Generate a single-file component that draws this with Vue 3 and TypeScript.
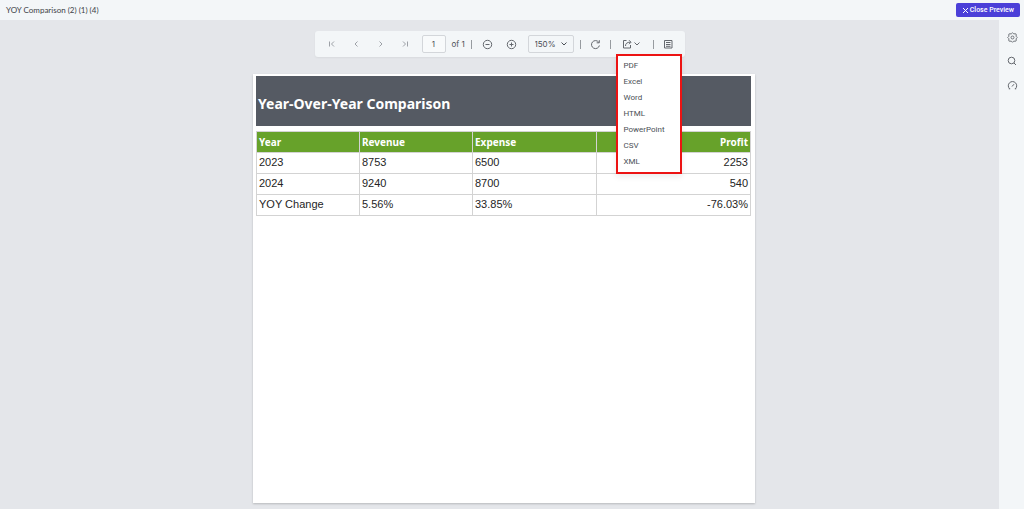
<script setup lang="ts">
import { ref } from 'vue'

interface ReportRow {
  year: string
  revenue: string
  expense: string
  profit: string
}

const pageNumber = ref('1')
const zoom = ref('150%')
const zoomLevels: string[] = ['50%', '100%', '150%', '200%']
const menuOpen = ref(true)
const formats: string[] = ['PDF', 'Excel', 'Word', 'HTML', 'PowerPoint', 'CSV', 'XML']
const rows: ReportRow[] = [
  { year: '2023', revenue: '8753', expense: '6500', profit: '2253' },
  { year: '2024', revenue: '9240', expense: '8700', profit: '540' },
  { year: 'YOY Change', revenue: '5.56%', expense: '33.85%', profit: '-76.03%' },
]
</script>

<template>
  <div class="app">
    <header class="topbar">
      <span class="doc-name">YOY Comparison (2) (1) (4)</span>
      <button class="close" type="button">
        <svg width="7" height="7" viewBox="0 0 7 7"><path d="M1 1l5 5M6 1l-5 5" /></svg>
        <span>Close Preview</span>
      </button>
    </header>
    <div class="body">
      <main class="viewer">
        <div class="toolbar">
          <div class="nav">
            <button type="button" class="icon" aria-label="First page">
              <svg width="8" height="8" viewBox="0 0 8 8"><path d="M1.5 1.5v5M6 1.5L3.5 4 6 6.500" /></svg>
            </button>
            <button type="button" class="icon" aria-label="Previous page">
              <svg width="8" height="8" viewBox="0 0 8 8"><path d="M5.500 1.500L3 4l2.500 2.500" /></svg>
            </button>
            <button type="button" class="icon" aria-label="Next page">
              <svg width="8" height="8" viewBox="0 0 8 8"><path d="M2.500 1.500L5 4 2.500 6.500" /></svg>
            </button>
            <button type="button" class="icon" aria-label="Last page">
              <svg width="8" height="8" viewBox="0 0 8 8"><path d="M2 1.500L4.500 4 2 6.500M6.500 1.500v5" /></svg>
            </button>
          </div>
          <input v-model="pageNumber" class="page-input" type="text" aria-label="Page number" />
          <span class="page-count">of 1</span>
          <span class="sep"></span>
          <button type="button" class="icon" aria-label="Zoom out">
            <svg width="11" height="11" viewBox="0 0 11 11"><circle cx="5.500" cy="5.500" r="4.200" /><path d="M3.500 5.500h4" /></svg>
          </button>
          <button type="button" class="icon" aria-label="Zoom in">
            <svg width="11" height="11" viewBox="0 0 11 11"><circle cx="5.500" cy="5.500" r="4.200" /><path d="M3.500 5.500h4M5.500 3.500v4" /></svg>
          </button>
          <div class="zoom">
            <select v-model="zoom" aria-label="Zoom level">
              <option v-for="level in zoomLevels" :key="level">{{ level }}</option>
            </select>
            <svg class="caret" width="8" height="6" viewBox="0 0 8 6"><path d="M1.500 1.500L4 4l2.500-2.500" /></svg>
          </div>
          <span class="sep"></span>
          <button type="button" class="icon refresh" aria-label="Refresh">
            <svg width="11" height="11" viewBox="0 0 11 11"><path d="M8.700 3.200A4 4 0 1 0 9.400 6.500M9.300 1.200v2.600H6.700" /></svg>
          </button>
          <span class="sep"></span>
          <div class="export">
            <button type="button" class="icon export-button" aria-label="Export" :aria-expanded="menuOpen" @click="menuOpen = !menuOpen">
              <svg width="10" height="10" viewBox="0 0 10 10"><path d="M4.500 1.500h-3v7.500h7V6M3.500 7C3.500 4.500 5 3.200 8.500 3.200M7 1.200l2 2-2 2" /></svg>
              <svg width="8" height="6" viewBox="0 0 8 6"><path d="M1.500 1.500L4 4l2.500-2.500" /></svg>
            </button>
            <ul v-if="menuOpen" class="menu">
              <li v-for="format in formats" :key="format">
                <button type="button">{{ format }}</button>
              </li>
            </ul>
          </div>
          <span class="sep"></span>
          <button type="button" class="icon parameters" aria-label="Parameters">
            <svg width="10" height="10" viewBox="0 0 10 10"><path d="M1.500 1.500h7.500v7.500h-7.500zM3 3.500h4.500M3 5.500h4.500M3 7.300h4.500" /></svg>
          </button>
        </div>
        <section class="page">
          <h1>Year-Over-Year Comparison</h1>
          <table>
            <colgroup>
              <col class="c-year" /><col class="c-revenue" /><col class="c-expense" /><col />
            </colgroup>
            <thead>
              <tr><th>Year</th><th>Revenue</th><th>Expense</th><th class="num">Profit</th></tr>
            </thead>
            <tbody>
              <tr v-for="row in rows" :key="row.year">
                <td>{{ row.year }}</td>
                <td>{{ row.revenue }}</td>
                <td>{{ row.expense }}</td>
                <td class="num">{{ row.profit }}</td>
              </tr>
            </tbody>
          </table>
        </section>
      </main>
      <aside class="side">
        <button type="button" class="icon" aria-label="Settings">
          <svg width="11" height="11" viewBox="0 0 24 24" stroke-width="2">
            <path d="M12 1.500l2.500 2.500h4.500a1 1 0 0 1 1 1v4.500l2.500 2.500-2.500 2.500V19a1 1 0 0 1-1 1h-4.500L12 22.500 9.500 20H5a1 1 0 0 1-1-1v-4.500L1.500 12 4 9.500V5a1 1 0 0 1 1-1h4.500z" />
            <circle cx="12" cy="12" r="3.200" />
          </svg>
        </button>
        <button type="button" class="icon" aria-label="Search">
          <svg width="10" height="10" viewBox="0 0 10 10"><circle cx="4.500" cy="4.500" r="3.300" /><path d="M7 7l2 2" /></svg>
        </button>
        <button type="button" class="icon" aria-label="Performance">
          <svg width="11" height="11" viewBox="0 0 11 11"><path d="M2.600 8.800A4.200 4.200 0 1 1 8.400 8.800M1.800 8.800h1.400M7.800 8.800h1.400M5 6.500l2-2.300" /></svg>
        </button>
      </aside>
    </div>
  </div>
</template>

<style>
body {
  background: #e4e6ea;
}
</style>

<style scoped>
.app {
  box-sizing: border-box;
  min-height: 100vh;
  display: flex;
  flex-direction: column;
  font-family: Inter, "Liberation Sans", sans-serif;
  font-size: 8px;
  color: #4b4f56;
  background: #e4e6ea;
}

button {
  font: inherit;
  color: inherit;
  border: 0;
  padding: 0;
  background: none;
  cursor: pointer;
}

svg {
  display: block;
  fill: none;
  stroke: currentColor;
}

.topbar {
  box-sizing: border-box;
  height: 20px;
  display: flex;
  align-items: center;
  justify-content: space-between;
  padding: 0 4px 0 6px;
  background: #f3f6f8;
}

.doc-name {
  font-family: Lato, "Open Sans", sans-serif;
  color: #3d4147;
}

.close {
  height: 14px;
  display: flex;
  align-items: center;
  gap: 1px;
  padding: 0 6px;
  border-radius: 2px;
  background: #4b3fd8;
  color: #fff;
  font: 500 7px Roboto, "Liberation Sans", sans-serif;
}

.body {
  flex: 1;
  display: flex;
}

.viewer {
  flex: 1;
  display: flex;
  flex-direction: column;
  align-items: center;
  padding: 11px 0 6px;
}

.toolbar {
  box-sizing: border-box;
  width: 370px;
  height: 26px;
  display: flex;
  align-items: center;
  padding: 0 5px;
  border-radius: 3px;
  background: #f3f6f8;
  box-shadow: 0 1px 2px rgba(0, 0, 0, 0.05);
}

.icon {
  width: 24px;
  height: 20px;
  display: flex;
  align-items: center;
  justify-content: center;
  color: #64686e;
}

.nav {
  width: 98px;
  display: flex;
  justify-content: space-between;
}

.nav .icon {
  color: #9da1a7;
}

.page-input {
  box-sizing: border-box;
  width: 24px;
  height: 18px;
  margin: 0 6px 0 4px;
  padding: 0;
  border: 1px solid #d3d6da;
  border-radius: 2px;
  background: #f8fafb;
  color: #4b4f56;
  font: inherit;
  text-align: center;
}

.page-count {
  width: 19px;
  white-space: nowrap;
}

.sep {
  width: 1px;
  height: 9px;
  background: #979ba0;
}

.page-count + .sep {
  margin-right: 4px;
}

.zoom {
  position: relative;
  width: 46px;
  height: 18px;
  margin: 0 6px 0 4px;
}

.zoom select {
  appearance: none;
  box-sizing: border-box;
  width: 100%;
  height: 100%;
  padding: 0 6px;
  border: 1px solid #d3d6da;
  border-radius: 2px;
  background: transparent;
  color: inherit;
  font: inherit;
}

.caret {
  position: absolute;
  right: 6px;
  top: 6px;
  pointer-events: none;
}

.refresh {
  width: 29px;
}

.export {
  position: relative;
  margin: 0 12px 0 11px;
}

.export-button {
  width: 19px;
  gap: 1px;
}

.parameters {
  margin-left: 2px;
}

.menu {
  position: absolute;
  top: 20px;
  left: -6px;
  z-index: 1;
  box-sizing: border-box;
  width: 66px;
  margin: 0;
  padding: 1px 0 3px;
  border: 2px solid #ec1313;
  background: #fff;
  box-shadow: 0 3px 6px rgba(0, 0, 0, 0.08);
  font-family: Roboto, "Liberation Sans", sans-serif;
  list-style: none;
}

.menu button {
  display: block;
  width: 100%;
  height: 16px;
  padding: 0 6px;
  text-align: left;
}

.page {
  box-sizing: border-box;
  flex: 1;
  width: 502px;
  margin: 17px 0 0 9px;
  padding: 2px 4px 0 3px;
  background: #fff;
  box-shadow: 0 1px 2px rgba(0, 0, 0, 0.2);
}

h1 {
  height: 50px;
  margin: 0 0 5px;
  padding: 5px 2px 0;
  box-sizing: border-box;
  display: flex;
  align-items: center;
  background: #555a63;
  color: #fff;
  font: bold 14px "Noto Sans", "Open Sans", sans-serif;
}

table {
  width: 100%;
  border-collapse: collapse;
  table-layout: fixed;
  color: #252525;
  font: 11px "Liberation Sans", Arial, sans-serif;
}

.c-year {
  width: 103px;
}

.c-revenue {
  width: 113px;
}

.c-expense {
  width: 124px;
}

th,
td {
  box-sizing: border-box;
  height: 21px;
  padding: 0 2px 2px;
  border: 1px solid #d3d3d3;
  text-align: left;
  line-height: 16px;
}

th {
  padding-bottom: 0;
  background: #67a22a;
  color: #fff;
  font: bold 10px/16px "Noto Sans", "Open Sans", sans-serif;
}

.num {
  text-align: right;
}

.side {
  width: 25px;
  display: flex;
  flex-direction: column;
  align-items: flex-end;
  gap: 4px;
  padding-top: 7px;
  background: #f3f6f8;
}
</style>
